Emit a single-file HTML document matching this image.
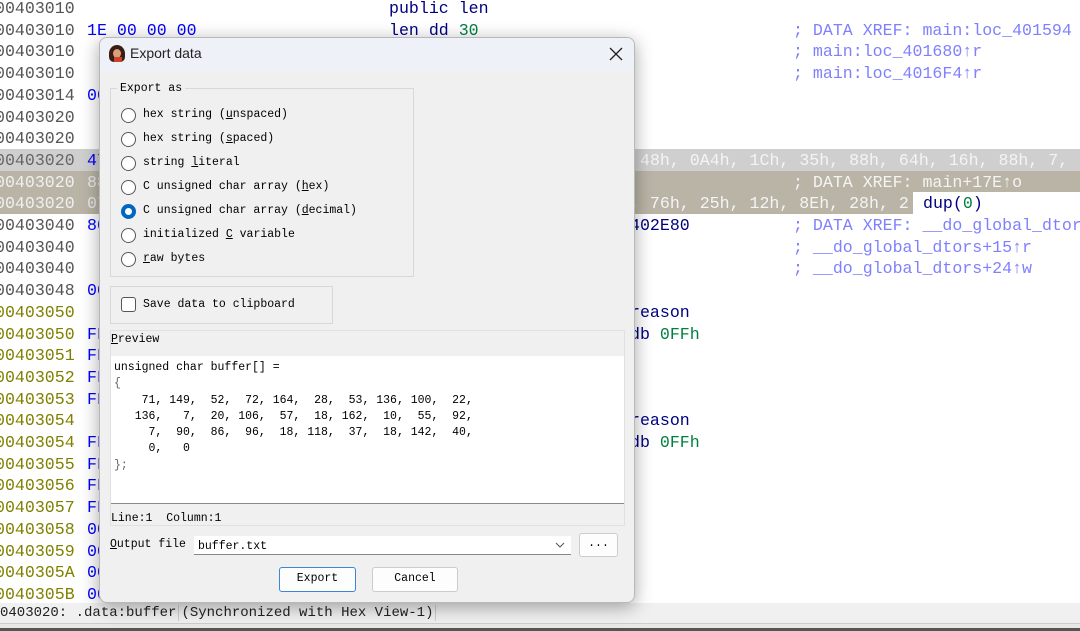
<!DOCTYPE html>
<html><head><meta charset="utf-8"><style>
*{margin:0;padding:0;box-sizing:border-box}
body{width:1080px;height:631px;overflow:hidden;background:#fff;position:relative;font-family:"Liberation Mono",monospace;}
.r{position:absolute;left:0;height:21.7px;width:1080px;font-size:16.6px;line-height:21.7px;white-space:pre}
.r span{position:absolute;top:1px}
.a{color:#555;left:-5px}
.o{color:#808000;left:-5px}
.h{color:#0000ff;left:87px}
.k{color:#000080}
.g{color:#008040}
.c{color:#8080ff}
#dlg{position:absolute;left:99px;top:37px;width:536px;height:566px;background:#f0f0f0;border:1px solid #b8b8b8;border-radius:8px;box-shadow:0 4px 18px rgba(0,0,0,.35);overflow:hidden;font-family:"Liberation Mono","Noto Sans CJK SC",monospace;font-size:11.5px;color:#000}
.t{position:absolute;left:0;top:0;width:100%;height:33px;background:#eef2f8;font-family:"Liberation Sans",sans-serif;font-size:14px}
.ab{position:absolute}
.rad{position:absolute;width:15px;height:15px;border:1px solid #555;border-radius:50%;background:#fff}
.lbl{position:absolute;white-space:pre}
u{text-decoration:underline}
.btn{position:absolute;background:#fdfdfd;border:1px solid #ccc;border-radius:3px;text-align:center;line-height:22px}
</style></head><body>
<div class="r" style="top:-3px"><span class="a">00403010</span><span class="k" style="left:389px">public len</span></div>
<div class="r" style="top:18.7px"><span class="a">00403010</span><span class="h">1E 00 00 00</span><span class="k" style="left:389px">len dd <b class="g" style="font-weight:normal">30</b></span><span class="c" style="left:793px">; DATA XREF: main:loc_401594</span></div>
<div class="r" style="top:40.4px"><span class="a">00403010</span><span class="c" style="left:793px">; main:loc_401680↑r</span></div>
<div class="r" style="top:62.1px"><span class="a">00403010</span><span class="c" style="left:793px">; main:loc_4016F4↑r</span></div>
<div class="r" style="top:83.8px"><span class="a">00403014</span><span class="h">00</span></div>
<div class="r" style="top:105.5px"><span class="a">00403020</span></div>
<div class="r" style="top:127.2px"><span class="a">00403020</span></div>
<div class="r" style="top:148.9px;background:#cfcfcf"><span class="a" style="color:#666">00403020</span><span class="h">47</span><span style="left:640px;color:#f4f4f4">48h, 0A4h, 1Ch, 35h, 88h, 64h, 16h, 88h, 7,</span></div>
<div class="r" style="top:170.6px;background:#b9b4a6"><span class="a" style="color:#f0f0f0">00403020</span><span style="left:87px;color:#e8e8e8">88</span><span style="left:793px;color:#f4f4f4">; DATA XREF: main+17E↑o</span></div>
<div class="r" style="top:192.3px;background:linear-gradient(90deg,#b9b4a6 913px,#fff 913px)"><span class="a" style="color:#f0f0f0">00403020</span><span style="left:87px;color:#e8e8e8">07</span><span style="left:630px;color:#f4f4f4">, 76h, 25h, 12h, 8Eh, 28h, 2</span><span class="k" style="left:923px">dup(<b class="g" style="font-weight:normal">0</b>)</span></div>
<div class="r" style="top:214px"><span class="a">00403040</span><span class="h">80</span><span class="k" style="left:630px">402E80</span><span class="c" style="left:793px">; DATA XREF: __do_global_dtor</span></div>
<div class="r" style="top:235.7px"><span class="a">00403040</span><span class="c" style="left:793px">; __do_global_dtors+15↑r</span></div>
<div class="r" style="top:257.4px"><span class="a">00403040</span><span class="c" style="left:793px">; __do_global_dtors+24↑w</span></div>
<div class="r" style="top:279.1px"><span class="a">00403048</span><span class="h">00</span></div>
<div class="r" style="top:300.8px"><span class="o">00403050</span><span class="k" style="left:630px">reason</span></div>
<div class="r" style="top:322.5px"><span class="o">00403050</span><span class="h">FF</span><span class="k" style="left:630px">db <b class="g" style="font-weight:normal">0FFh</b></span></div>
<div class="r" style="top:344.2px"><span class="o">00403051</span><span class="h">FF</span></div>
<div class="r" style="top:365.9px"><span class="o">00403052</span><span class="h">FF</span></div>
<div class="r" style="top:387.6px"><span class="o">00403053</span><span class="h">FF</span></div>
<div class="r" style="top:409.3px"><span class="o">00403054</span><span class="k" style="left:630px">reason</span></div>
<div class="r" style="top:431px"><span class="o">00403054</span><span class="h">FF</span><span class="k" style="left:630px">db <b class="g" style="font-weight:normal">0FFh</b></span></div>
<div class="r" style="top:452.7px"><span class="o">00403055</span><span class="h">FF</span></div>
<div class="r" style="top:474.4px"><span class="o">00403056</span><span class="h">FF</span></div>
<div class="r" style="top:496.1px"><span class="o">00403057</span><span class="h">FF</span></div>
<div class="r" style="top:517.8px"><span class="o">00403058</span><span class="h">00</span></div>
<div class="r" style="top:539.5px"><span class="o">00403059</span><span class="h">00</span></div>
<div class="r" style="top:561.2px"><span class="o">0040305A</span><span class="h">00</span></div>
<div class="r" style="top:582.9px"><span class="o">0040305B</span><span class="h">00</span></div>
<div style="position:absolute;left:0;top:603px;width:1080px;height:20px;background:#f0f0f0;font-size:14px;line-height:20px;white-space:pre;color:#222">0403020: .data:buffer<span style="border-left:1px solid #ccc;margin-left:2px;padding-left:2px;border-right:1px solid #ccc;padding-right:2px">(Synchronized with Hex View-1)</span></div>
<div style="position:absolute;left:0;top:623px;width:1080px;height:8px;background:#e8e8e8;border-top:1px solid #ccc"></div>
<div style="position:absolute;left:0;top:628px;width:1080px;height:3px;background:#555"></div>

<div id="dlg">
<div class="t">
 <div class="ab" style="left:9px;top:7px;width:16px;height:17px;border-radius:50% 50% 30% 30%;background:#3a1e14"></div>
 <div class="ab" style="left:13px;top:11px;width:8px;height:9px;border-radius:50%;background:#d9a07a"></div>
 <div class="ab" style="left:14px;top:19px;width:8px;height:5px;background:#d0402a"></div>
 <div class="ab" style="left:30px;top:7px;color:#222">Export data</div>
 <svg class="ab" style="left:509px;top:9px" width="14" height="14"><path d="M1 1L13 13M13 1L1 13" stroke="#222" stroke-width="1.3"/></svg>
</div>
<div class="ab" style="left:10px;top:50px;width:304px;height:189px;border:1px solid #d8d8d8"></div>
<div class="lbl" style="left:17px;top:44px;background:#f0f0f0;padding:0 3px">Export as</div>
<div class="rad" style="left:21px;top:70px"></div><div class="lbl" style="left:43px;top:70px">hex string (<u>u</u>nspaced)</div>
<div class="rad" style="left:21px;top:94px"></div><div class="lbl" style="left:43px;top:94px">hex string (<u>s</u>paced)</div>
<div class="rad" style="left:21px;top:118px"></div><div class="lbl" style="left:43px;top:118px">string <u>l</u>iteral</div>
<div class="rad" style="left:21px;top:142px"></div><div class="lbl" style="left:43px;top:142px">C unsigned char array (<u>h</u>ex)</div>
<div class="rad" style="left:21px;top:166px;border:4px solid #0067c0"></div><div class="lbl" style="left:43px;top:166px">C unsigned char array (<u>d</u>ecimal)</div>
<div class="rad" style="left:21px;top:190px"></div><div class="lbl" style="left:43px;top:190px">initialized <u>C</u> variable</div>
<div class="rad" style="left:21px;top:214px"></div><div class="lbl" style="left:43px;top:214px"><u>r</u>aw bytes</div>
<div class="ab" style="left:10px;top:248px;width:223px;height:38px;border:1px solid #d8d8d8"></div>
<div class="ab" style="left:21px;top:259px;width:15px;height:15px;border:1px solid #555;border-radius:3px;background:#fff"></div>
<div class="lbl" style="left:43px;top:260px">Save data to clipboard</div>
<div class="ab" style="left:10px;top:292px;width:515px;height:196px;border:1px solid #e0e0e0"></div>
<div class="lbl" style="left:11px;top:295px"><u>P</u>review</div>
<div class="ab" style="left:11px;top:318px;width:513px;height:148px;background:#fff;border-bottom:1px solid #888"></div>
<div class="lbl" style="left:14px;top:322px;line-height:16.3px">unsigned char buffer[] =
<span style="color:#666">{</span>
    71, 149,  52,  72, 164,  28,  53, 136, 100,  22,
   136,   7,  20, 106,  57,  18, 162,  10,  55,  92,
     7,  90,  86,  96,  18, 118,  37,  18, 142,  40,
     0,   0
<span style="color:#666">};</span></div>
<div class="lbl" style="left:11px;top:474px">Line:1  Column:1</div>
<div class="lbl" style="left:10px;top:500px"><u>O</u>utput file</div>
<div class="ab" style="left:94px;top:498px;width:377px;height:19px;background:#fff;border-bottom:1px solid #888"></div>
<div class="lbl" style="left:98px;top:502px">buffer.txt</div>
<svg class="ab" style="left:455px;top:504px" width="10" height="7"><path d="M1 1L5 5L9 1" stroke="#555" fill="none"/></svg>
<div class="btn" style="left:479px;top:495px;width:39px;height:24px;line-height:20px">...</div>
<div class="btn" style="left:179px;top:529px;width:77px;height:25px;border:1px solid #3b86d6">Export</div>
<div class="btn" style="left:272px;top:529px;width:86px;height:25px">Cancel</div>
</div>
</body></html>
